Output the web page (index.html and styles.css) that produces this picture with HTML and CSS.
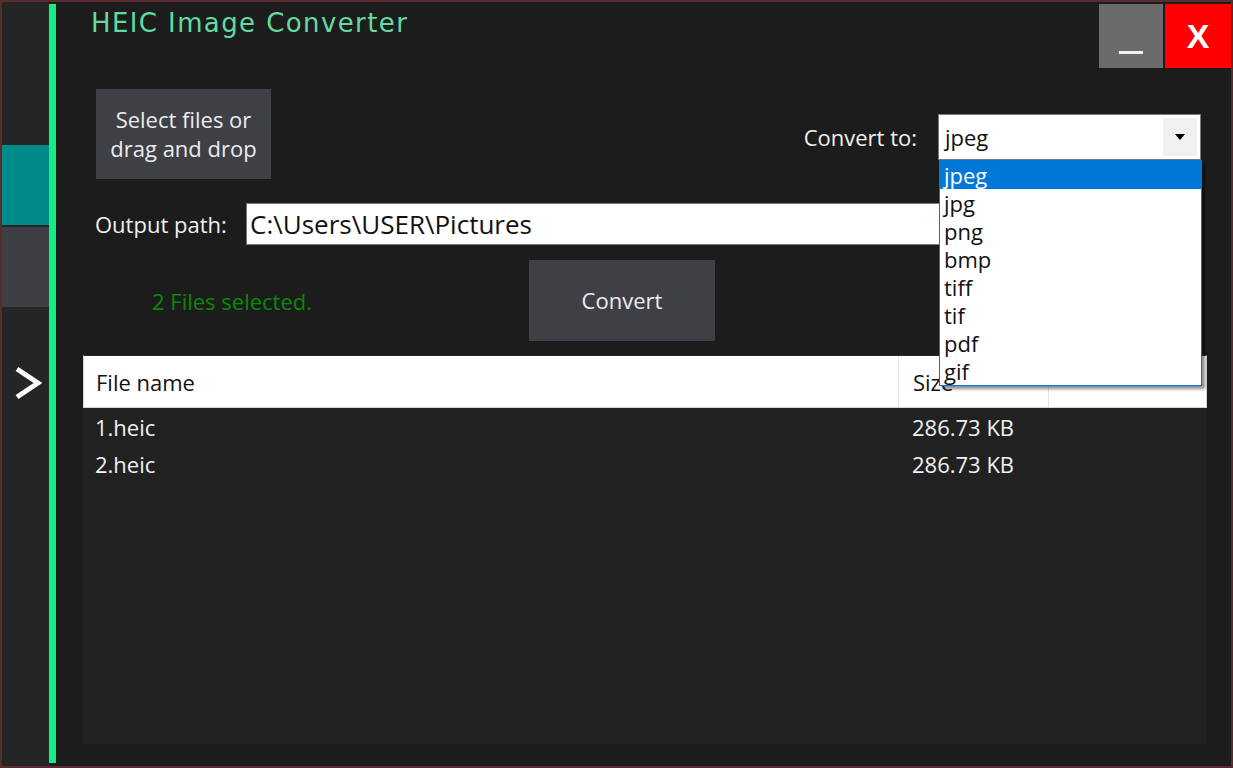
FILE: index.html
```html
<!DOCTYPE html>
<html lang="en">
<head>
  <meta charset="UTF-8" />
  <title>HEIC Image Converter</title>
  <link rel="stylesheet" href="styles.css">
</head>
<body>
  <div class="window">
    <aside class="sidebar">
      <div class="side-tab active"></div>
      <div class="side-tab"></div>
      <button class="side-toggle" aria-label="Expand">
        <svg width="28" height="34" viewBox="0 0 28 34"><polyline points="3,3 24,17 3,31" fill="none" stroke="#fff" stroke-width="5" stroke-linejoin="miter"/></svg>
      </button>
    </aside>
    <div class="accent"></div>

    <main class="main">
      <div class="title-bar">
        <h1 class="app-title">HEIC Image Converter</h1>
        <div class="window-buttons">
          <button class="win-btn min-btn" aria-label="Minimize"><span class="min-line"></span></button>
          <button class="win-btn close-btn">X</button>
        </div>
      </div>

      <div class="row row-select">
        <button class="dark-btn select-btn">Select files or<br>drag and drop</button>
        <div class="convert-to">
          <label>Convert to:</label>
          <div class="combo">
            <span class="combo-value">jpeg</span>
            <span class="combo-arrow"><span class="tri"></span></span>
            <ul class="combo-list">
              <li class="selected">jpeg</li>
              <li>jpg</li>
              <li>png</li>
              <li>bmp</li>
              <li>tiff</li>
              <li>tif</li>
              <li>pdf</li>
              <li>gif</li>
            </ul>
          </div>
        </div>
      </div>

      <div class="row row-output">
        <label>Output path:</label>
        <div class="path-input">C:\Users\USER\Pictures</div>
      </div>

      <div class="row row-convert">
        <span class="status">2 Files selected.</span>
        <button class="dark-btn convert-btn">Convert</button>
      </div>

      <div class="file-list">
        <div class="list-head">
          <div class="col col-name">File name</div>
          <div class="col col-size">Size</div>
          <div class="col col-rest"></div>
        </div>
        <div class="list-row">
          <div class="col col-name">1.heic</div>
          <div class="col col-size">286.73 KB</div>
        </div>
        <div class="list-row">
          <div class="col col-name">2.heic</div>
          <div class="col col-size">286.73 KB</div>
        </div>
      </div>
    </main>
  </div>
</body>
</html>
```

FILE: styles.css
```css
* { box-sizing: border-box; }
body {
  margin: 0;
  padding: 0;
  background: #4a2426;
  font-family: "Open Sans", Arial, sans-serif;
  color: #f0f0f0;
}
button {
  font-family: inherit;
  border: none;
  padding: 0;
  cursor: pointer;
}
.window {
  width: 1233px;
  height: 768px;
  border: 2px solid #5a2b2d;
  display: flex;
  background: #1c1c1c;
}
.sidebar {
  width: 47px;
  background: #252526;
  display: flex;
  flex-direction: column;
  padding-top: 143px;
  gap: 2px;
}
.side-tab {
  height: 80px;
  background: #3e3e45;
}
.side-tab.active {
  background: #008a8a;
}
.side-toggle {
  background: none;
  margin-top: 57px;
  margin-left: 12px;
  width: 28px;
  height: 34px;
}
.accent {
  width: 7px;
  margin: 2px 0 3px;
  background: #12ee84;
}
.main {
  flex: 1;
  display: flex;
  flex-direction: column;
  padding: 2px 0 0 0;
}
.title-bar {
  display: flex;
  justify-content: space-between;
  align-items: flex-start;
  height: 64px;
}
.app-title {
  margin: 4px 0 0 35px;
  font-family: "DejaVu Sans", sans-serif;
  font-weight: 400;
  font-size: 26px;
  letter-spacing: 1.4px;
  color: #62dba3;
}
.window-buttons {
  display: flex;
  gap: 2px;
}
.win-btn {
  height: 64px;
  color: #fff;
}
.min-btn {
  width: 64px;
  background: #6b6b6b;
  display: flex;
  justify-content: center;
  align-items: flex-end;
  padding-bottom: 14px;
}
.min-line {
  width: 24px;
  height: 3px;
  background: #f2f2f2;
}
.close-btn {
  width: 66px;
  background: #ff0000;
  font-family: "Liberation Sans", Arial, sans-serif;
  font-weight: bold;
  font-size: 34px;
}
.row {
  display: flex;
  align-items: center;
}
.dark-btn {
  background: #3f3f46;
  color: #ececec;
  font-size: 22px;
  line-height: 29px;
}
.row-select {
  margin-top: 21px;
  align-items: flex-start;
  justify-content: space-between;
  padding: 0 30px 0 40px;
}
.select-btn {
  width: 175px;
  height: 90px;
}
.convert-to {
  display: flex;
  align-items: center;
  margin-top: 25px;
  gap: 21px;
  font-size: 22px;
}
.combo {
  position: relative;
  width: 263px;
  height: 46px;
  background: #fff;
  border: 1px solid #7a7a7a;
  display: flex;
  align-items: center;
  justify-content: space-between;
  padding: 3px 3px 3px 6px;
}
.combo-value {
  color: #111;
  font-size: 22px;
}
.combo-arrow {
  width: 34px;
  height: 100%;
  background: #f0f0f0;
  display: flex;
  align-items: center;
  justify-content: center;
}
.tri {
  width: 0;
  height: 0;
  border-left: 5px solid transparent;
  border-right: 5px solid transparent;
  border-top: 6px solid #000;
}
.combo-list {
  position: absolute;
  top: 45px;
  left: 0;
  width: 263px;
  margin: 0;
  padding: 0;
  list-style: none;
  background: #fff;
  border: 1px solid #0078d7;
  box-shadow: 3px 3px 3px rgba(0, 0, 0, 0.45);
  z-index: 10;
}
.combo-list li {
  height: 28px;
  line-height: 28px;
  padding-left: 4px;
  font-size: 22px;
  color: #111;
}
.combo-list li.selected {
  background: #0078d7;
  color: #fff;
}
.row-output {
  margin-top: 24px;
  padding-left: 39px;
  font-size: 22px;
}
.row-output label {
  width: 151px;
}
.path-input {
  width: 945px;
  height: 42px;
  background: #fff;
  border: 1px solid #7a7a7a;
  color: #111;
  font-size: 26px;
  line-height: 40px;
  padding-left: 3px;
}
.row-convert {
  margin-top: 15px;
  height: 81px;
  padding-left: 96px;
}
.status {
  color: #078a07;
  font-size: 22px;
  width: 377px;
}
.convert-btn {
  width: 186px;
  height: 81px;
}
.file-list {
  margin: 14px 24px 22px 27px;
  flex: 1;
  background: #212121;
  font-size: 22px;
}
.list-head {
  display: flex;
  height: 53px;
  background: #fff;
  color: #111;
  border: 1px solid #d4d4d4;
  border-top-color: #2a2a2a;
}
.list-head .col {
  display: flex;
  align-items: center;
  border-right: 1px solid #e5e5e5;
}
.col-name {
  width: 815px;
  padding-left: 12px;
}
.col-size {
  width: 150px;
  padding-left: 14px;
}
.col-rest {
  flex: 1;
}
.list-head .col-rest {
  border-right: none;
}
.list-row {
  display: flex;
  height: 37px;
  align-items: center;
  color: #f2f2f2;
}
```
